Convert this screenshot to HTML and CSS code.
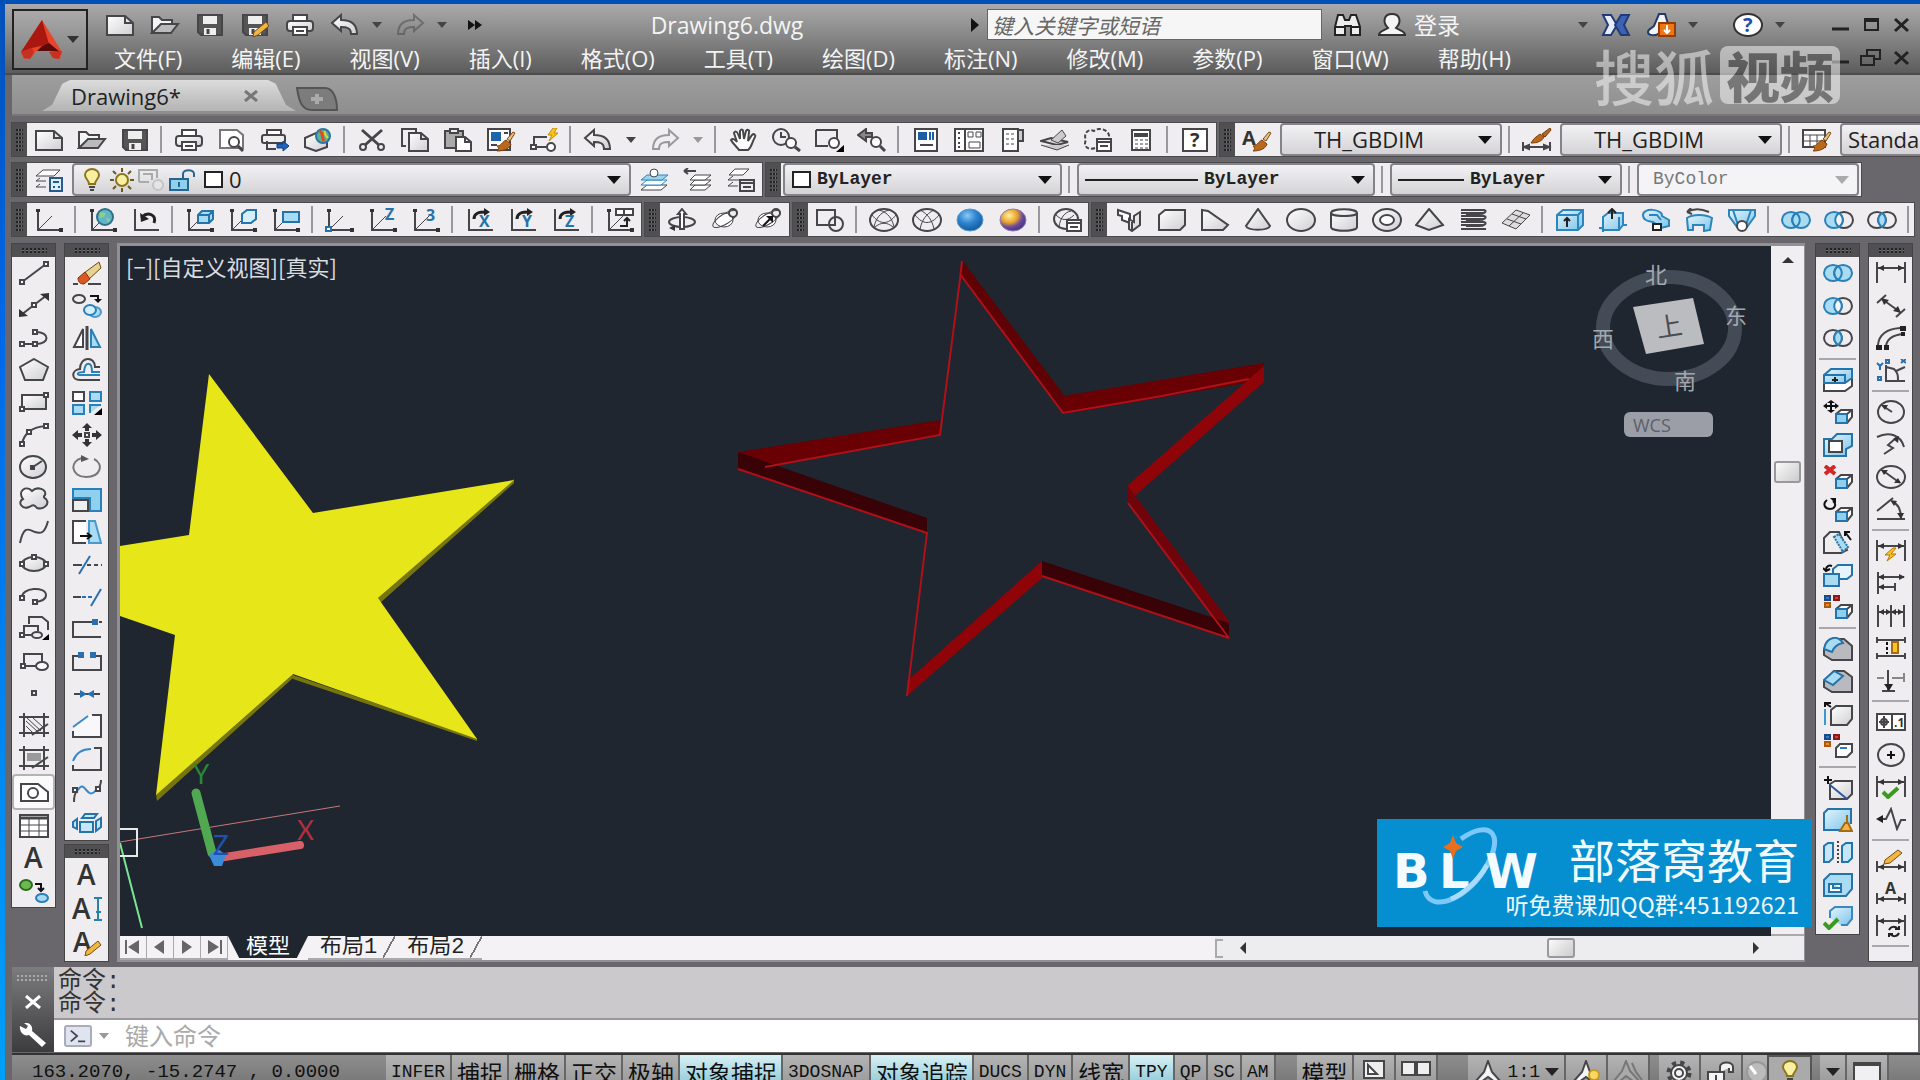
FILE: index.html
```html
<!DOCTYPE html>
<html lang="zh-CN">
<head>
	<meta charset="utf-8">
	<meta name="viewport" content="width=device-width, initial-scale=1.0">
	<title>Drawing6.dwg</title>
	<link rel="stylesheet" href="styles.css">
</head>
<body>
	<!-- shared fills -->
	<svg class="fills" aria-hidden="true">
		<defs>
			<linearGradient id="sky" x1="0" y1="0" x2="1" y2="1"><stop offset="0" stop-color="#e4f5fd"/><stop offset="1" stop-color="#7cc4ea"/></linearGradient>
			<linearGradient id="gray" x1="0" y1="0" x2="1" y2="1"><stop offset="0" stop-color="#fff"/><stop offset="1" stop-color="#cfcfd2"/></linearGradient>
			<radialGradient id="ball-blue" cx=".4" cy=".3" r=".7"><stop offset="0" stop-color="#8cc8f4"/><stop offset=".5" stop-color="#2d84cf"/><stop offset="1" stop-color="#155a9e"/></radialGradient>
			<radialGradient id="ball-gold" cx=".35" cy=".3" r=".8"><stop offset="0" stop-color="#fff0a0"/><stop offset=".4" stop-color="#e9a32c"/><stop offset=".65" stop-color="#6a4a9c"/><stop offset="1" stop-color="#3c2a80"/></radialGradient>
		</defs>
	</svg>
	<!-- icon sprite, every symbol is 30x24 -->
	<svg class="sprite" aria-hidden="true">
		<symbol id="new" viewBox="0 0 30 24"><path fill="url(#gray)" d="M2 3h18l8 7v12H2z"/><path d="M20 3v7h8"/></symbol>
		<symbol id="open" viewBox="0 0 30 24"><path fill="#f4f4f4" d="M2 20V4h7l3 3h10v5"/><path fill="#bbb" d="M2 20l9-9h17l-7 9z"/></symbol>
		<symbol id="save" viewBox="0 0 30 24"><path fill="#555" d="M3 2h24v20H6l-3-3z"/><path fill="#eee" stroke="none" d="M8 3h14v8H8zM9 15h12v7H9z"/><path d="M13 16v5" stroke-width="3"/></symbol>
		<symbol id="pencil" viewBox="0 0 30 24"><path fill="#f0b840" stroke="#7a4a14" stroke-width="1" d="M14 19l12-10 3 4-11 9-5 2z"/></symbol>
		<symbol id="saveas" viewBox="0 0 30 24"><use href="#save"/><use href="#pencil"/></symbol>
		<symbol id="print" viewBox="0 0 30 24"><path fill="#fff" d="M8 9V2h14v7"/><rect fill="url(#gray)" x="2" y="8" width="26" height="10" rx="3"/><path fill="#fff" d="M8 14h14v8H8z"/><path d="M11 18h8"/></symbol>
		<symbol id="preview" viewBox="0 0 30 24"><path fill="#fff" stroke="#777" d="M3 20V2h17l6 5v13z"/><circle cx="17" cy="14" r="5" fill="#fff"/><path stroke-width="3" d="M21 18l5 5"/></symbol>
		<symbol id="publish" viewBox="0 0 30 24"><path fill="#fff" d="M7 8V2h14v6"/><rect fill="#eee" x="2" y="7" width="23" height="8" rx="2"/><path d="M7 13v8h9"/><path fill="#1d64c0" stroke="#0b3f8a" stroke-width="1" d="M17 16h6v-3l6 5-6 5v-3h-6z"/></symbol>
		<symbol id="print3d" viewBox="0 0 30 24"><path fill="url(#gray)" d="M2 10l11-5 11 5v9l-11 4-11-4z"/><circle cx="20" cy="8" r="7" fill="#58b48c" stroke="#2b74a8"/><path stroke="#e84820" stroke-width="3" d="M17 3c4 3 1 6 4 10"/><path stroke="#f0d030" d="M22 3c-1 3 1 5 3 7"/></symbol>
		<symbol id="cut" viewBox="0 0 30 24"><path stroke-width="3" d="M5 2l17 15M25 2L8 17"/><circle cx="6" cy="19" r="3"/><circle cx="24" cy="19" r="3"/></symbol>
		<symbol id="copy" viewBox="0 0 30 24"><path d="M6 18H2V1h14v3"/><path fill="url(#gray)" d="M9 5h12l7 6v12H9z"/><path d="M21 5v6h7"/></symbol>
		<symbol id="paste" viewBox="0 0 30 24"><path fill="#aaa" d="M2 3h18v17H2z"/><path fill="#eee" d="M7 1h8v4H7z"/><path fill="#fff" d="M13 9h9l6 5v9H13z"/><path d="M22 9v5h6"/></symbol>
		<symbol id="brush" viewBox="0 0 30 24"><path fill="#e8c080" stroke="#7a4a14" stroke-width="1" d="M21 11l6-7 2 1-5 8z"/><path fill="#b8691c" stroke="#7a3c08" stroke-width="1" d="M11 18c4 0 5-4 9-6l5 4c-1 4-6 7-14 7 2-2 2-3 0-5z"/></symbol>
		<symbol id="match" viewBox="0 0 30 24"><path fill="#fff" d="M2 1h22v21H2z"/><path fill="#1d64a8" stroke="none" d="M5 4h10v9H5z"/><path d="M18 5h4M5 17h6"/><use href="#brush"/></symbol>
		<symbol id="bedit" viewBox="0 0 30 24"><path d="M5 19V9h13M5 19h12"/><path fill="#fff" d="M2 17h5v4H2z"/><circle cx="22" cy="19" r="4" fill="#fff"/><path fill="#f8c420" stroke="#c88a00" stroke-width="1" d="M24 0l-5 7h4l-3 6 9-8h-4l3-5z"/></symbol>
		<symbol id="undo" viewBox="0 0 30 24"><path fill="url(#gray)" d="M2 10l9-8v5c9 0 16 3 16 14h-6c0-6-4-7-10-7v4z"/></symbol>
		<symbol id="redo" viewBox="0 0 30 24"><path fill="none" d="M28 10l-9-8v5C10 7 3 10 3 21h6c0-6 4-7 10-7v4z"/></symbol>
		<symbol id="pan" viewBox="0 0 30 24"><path fill="#fff" d="M11 22c-2-3-6-6-8-10 1-2 4-1 6 2L6 5c1-2 3-2 4 1l2 5V3c1-2 3-2 3 0l1 8 2-8c1-2 4-1 3 1l-1 9 4-6c2-2 4 0 3 2-3 5-3 10-7 13z"/></symbol>
		<symbol id="zoomrt" viewBox="0 0 30 24"><circle cx="10" cy="9" r="8"/><path d="M10 4v5h5"/><circle cx="20" cy="15" r="5" fill="#fff"/><path stroke-width="3" d="M24 19l5 4"/></symbol>
		<symbol id="zoomwin" viewBox="0 0 30 24"><path d="M2 2h21v9M2 2v16h12"/><circle cx="20" cy="15" r="5" fill="#fff"/><path fill="#000" stroke="none" d="M30 17v7h-8z"/></symbol>
		<symbol id="zoomprev" viewBox="0 0 30 24"><path fill="#888" d="M1 7l8-6v4h6v4H9v4z"/><circle cx="19" cy="14" r="5" fill="#fff"/><path stroke-width="3" d="M23 18l5 5"/></symbol>
		<symbol id="props" viewBox="0 0 30 24"><path fill="#fff" d="M4 1h22v22H4z"/><path fill="#1d5ca8" stroke="none" d="M7 4h9v8H7z"/><path d="M19 4v8M22 4v8" stroke="#1d5ca8"/><path d="M9 17h13"/></symbol>
		<symbol id="dcenter" viewBox="0 0 30 24"><path fill="#fff" d="M1 1h28v22H1zM11 1v22"/><path stroke-dasharray="2 3" d="M4 5h5M4 10h5M4 15h5M4 19h5"/><path stroke-width="1" d="M14 4h5v5h-5zM22 4h5v5h-5zM15 14h11v6H15z"/></symbol>
		<symbol id="palette" viewBox="0 0 30 24"><path fill="#fff" d="M6 1h15v22H6z"/><path fill="#ccc" d="M21 2h5v11h-5z"/><path stroke-dasharray="3 2" stroke-width="1" d="M9 6h10M9 11h10M9 16h10"/></symbol>
		<symbol id="sheet" viewBox="0 0 30 24"><path fill="#ddd" d="M1 13l10-3 17 4-11 3z"/><path fill="#ccc" stroke-width="1" d="M1 17l16 5 12-5M11 12L22 2l4 6-8 7z"/></symbol>
		<symbol id="markup" viewBox="0 0 30 24"><path stroke-dasharray="4 2" d="M12 20c-8 3-12-3-9-8-3-6 2-12 8-9 6-5 16 0 15 6"/><path fill="#fff" d="M14 11h14v12H14zM14 14h14M17 18h8"/></symbol>
		<symbol id="calc" viewBox="0 0 30 24"><path fill="#fff" d="M6 2h18v20H6zM9 6h12v2H9z"/><path stroke-dasharray="3 2" stroke-width="1" d="M9 12h13M9 16h13M9 20h13"/></symbol>
		<symbol id="help" viewBox="0 0 30 24"><path fill="#fff" d="M3 1h24v22H3z"/><text x="10" y="19" class="glyph">?</text></symbol>
		<symbol id="tstyle" viewBox="0 0 30 24"><text x="0" y="17" class="glyph">A</text><use href="#brush"/></symbol>
		<symbol id="dstyle" viewBox="0 0 30 24"><path d="M1 14v9M28 14v9M2 19h25"/><path fill="#333" d="M2 19l5-2v4zM27 19l-5-2v4z"/><path fill="#b8691c" stroke="#7a3c08" stroke-width="1" d="M9 15c3-5 5-6 9-9l4 3c-2 4-6 6-13 6zM20 6l8-6 1 2-6 7z"/></symbol>
		<symbol id="tabstyle" viewBox="0 0 30 24"><path fill="#fff" d="M1 2h22v17H1z"/><path d="M1 7h22M8 7v12M15 7v12M1 13h22" stroke-width="1"/><use href="#brush"/></symbol>
		<symbol id="layers" viewBox="0 0 30 24"><path fill="#fff" stroke-width="1" d="M2 8l7-6h17l-6 6zM2 13h10M2 19h10M2 13l4-3M2 19l4-3"/><path fill="#d9effa" stroke="#2a5a8c" d="M16 10h12v13H16z"/><path stroke="#2a5a8c" d="M19 14h6M19 19h2M24 19h2"/></symbol>
		<symbol id="laycur" viewBox="0 0 30 24"><g fill="#fff" stroke-width="1"><path d="M1 22l6-5h20l-6 5z"/><path stroke="#2c86bd" d="M1 17l6-5h20l-6 5z"/><path stroke="#2c86bd" fill="#9bd4ef" d="M1 12l6-5h21l-6 5z"/><circle cx="14" cy="5" r="4"/></g></symbol>
		<symbol id="layprev" viewBox="0 0 30 24"><path d="M1 3h12M1 3l4-3M1 3l4 3"/><g fill="#fff" stroke-width="1"><path d="M7 22l5-5h16l-6 5z"/><path d="M7 17l5-5h16l-6 5z"/><path d="M7 12l5-5h16l-6 5z"/></g></symbol>
		<symbol id="laystate" viewBox="0 0 30 24"><path fill="#fff" stroke-width="1" d="M3 7l6-6h14l-6 6zM2 12h13M2 18h10M2 12l5-4M2 18l5-4"/><path fill="#eee" d="M14 12h14v11H14zM14 15h14M17 19h8"/></symbol>
		<symbol id="bulb" viewBox="0 0 30 24"><path fill="#f8f0a0" stroke="#8a7420" d="M12 16c0-4-4-5-4-9a7 6 0 0 1 14 0c0 4-4 5-4 9z"/><path d="M12 19h6M13 22h4"/></symbol>
		<symbol id="sun" viewBox="0 0 30 24"><circle cx="15" cy="12" r="6" fill="#f8f0a0" stroke="#8a7420"/><path stroke="#6a5a20" d="M15 0v4M15 20v4M3 12h4M23 12h4M6 3l3 3M24 3l-3 3M6 21l3-3M24 21l-3-3"/></symbol>
		<symbol id="vpfreeze" viewBox="0 0 30 24"><path stroke="#aaa" d="M2 14V2h18v8M2 14h10M6 6h9v6"/><circle cx="21" cy="17" r="5" stroke="#c4c4c4" fill="#e4e4e4"/></symbol>
		<symbol id="unlock" viewBox="0 0 30 24"><path fill="#8fd0ee" stroke="#24668f" d="M3 11h18v11H3z"/><path stroke="#24668f" d="M16 11V6c0-5 11-5 11 0v3"/><path stroke="#24668f" d="M12 14v5"/></symbol>
		<symbol id="ucs" viewBox="0 0 30 24"><path d="M4 1v21h24"/><path stroke-width="1" d="M4 22L18 8"/><path fill="#333" stroke="none" d="M2 1h4v3H2zM25 20h4v4h-4z"/></symbol>
		<symbol id="ucsworld" viewBox="0 0 30 24"><use href="#ucs"/><circle cx="17" cy="9" r="8" fill="#62b5c9" stroke="#2f7186"/><path fill="#8ad08c" stroke="none" d="M12 4l6 1-2 4-5 1zM18 10l4 1-2 4z"/></symbol>
		<symbol id="ucsprev" viewBox="0 0 30 24"><path d="M4 1v21h24"/><path stroke="#222" stroke-width="3" d="M11 9c6-6 15-2 12 6"/><path fill="#222" stroke="none" d="M9 5l9 6-8 3z"/></symbol>
		<symbol id="ucsface" viewBox="0 0 30 24"><use href="#ucs"/><path fill="#a6dbf3" stroke="#2473aa" d="M13 7l4-4h11v8l-4 4H13zM13 7h11v8M24 7l4-4"/></symbol>
		<symbol id="ucsobj" viewBox="0 0 30 24"><use href="#ucs"/><path fill="#d4eefa" stroke="#2473aa" d="M14 6l5-4h9v9l-5 4h-9z"/></symbol>
		<symbol id="ucsview" viewBox="0 0 30 24"><use href="#ucs"/><rect fill="#a6dbf3" stroke="#2473aa" x="12" y="4" width="16" height="10"/></symbol>
		<symbol id="ucsorg" viewBox="0 0 30 24"><use href="#ucs"/><rect fill="#fff" stroke="#2473aa" x="1" y="19" width="5" height="4"/></symbol>
		<symbol id="ucsz" viewBox="0 0 30 24"><use href="#ucs"/><text x="17" y="12" class="glyph blue small">Z</text></symbol>
		<symbol id="ucs3" viewBox="0 0 30 24"><use href="#ucs"/><text x="15" y="13" class="glyph blue small">3</text></symbol>
		<symbol id="rot" viewBox="0 0 30 24"><path d="M4 1v21h24"/><path stroke="#222" stroke-width="3" d="M9 11c0-6 5-7 12-7"/><path fill="#222" stroke="none" d="M19 0l6 4-6 4z"/></symbol>
		<symbol id="rotx" viewBox="0 0 30 24"><use href="#rot"/><text x="14" y="19" class="glyph blue small">X</text></symbol>
		<symbol id="roty" viewBox="0 0 30 24"><use href="#rot"/><text x="14" y="19" class="glyph blue small">Y</text></symbol>
		<symbol id="rotz" viewBox="0 0 30 24"><use href="#rot"/><text x="14" y="19" class="glyph blue small">Z</text></symbol>
		<symbol id="ucsapply" viewBox="0 0 30 24"><use href="#ucs"/><path fill="#fff" d="M11 1h8v6h-8zM19 1h9v6h-9z"/><path stroke="#222" d="M15 18h7v-7M19 13l3-3 3 3"/></symbol>
		<symbol id="orbit" viewBox="0 0 30 24"><ellipse cx="15" cy="14" rx="13" ry="5"/><path fill="#fff" d="M15 1l4 5h-2v15h-4V6h-2z"/><path fill="#333" stroke="none" d="M2 20l6-3v6z"/></symbol>
		<symbol id="forbit" viewBox="0 0 30 24"><g stroke-width="1"><ellipse cx="14" cy="12" rx="9" ry="7" fill="#fff"/><ellipse cx="15" cy="11" rx="14" ry="5" transform="rotate(-32 15 11)"/><circle cx="23" cy="5" r="4" stroke-width="2"/></g></symbol>
		<symbol id="corbit" viewBox="0 0 30 24"><use href="#forbit"/><path stroke="#111" d="M10 18l8-8"/><path fill="#111" stroke="none" d="M13 8h7v7z"/></symbol>
		<symbol id="vs2d" viewBox="0 0 30 24"><path d="M2 2h18v15H2z"/><circle cx="21" cy="16" r="7"/></symbol>
		<symbol id="vswire" viewBox="0 0 30 24"><ellipse cx="15" cy="12" rx="14" ry="11"/><path stroke-width="1" d="M3 7c8 10 16 10 24 0M5 19C7 8 15 2 22 2M25 19C23 8 15 2 8 2M6 19c6-5 12-5 18 0"/></symbol>
		<symbol id="vshide" viewBox="0 0 30 24"><ellipse cx="15" cy="12" rx="14" ry="11"/><path stroke-width="1" d="M3 7c8 10 16 10 24 0M8 2c8 4 12 10 14 19M22 2C14 6 10 12 8 21"/></symbol>
		<symbol id="vsreal" viewBox="0 0 30 24"><ellipse cx="15" cy="12" rx="13" ry="11" fill="url(#ball-blue)" stroke="#5c9cd2" stroke-width="1"/></symbol>
		<symbol id="vsconc" viewBox="0 0 30 24"><ellipse cx="15" cy="12" rx="13" ry="11" fill="url(#ball-gold)" stroke="#8c7ab0" stroke-width="1"/></symbol>
		<symbol id="vsman" viewBox="0 0 30 24"><ellipse cx="14" cy="11" rx="12" ry="10"/><path stroke-width="1" d="M4 7c6 6 12 6 18 0M7 19C8 10 13 4 19 3"/><path fill="#fff" d="M15 12h14v11H15zM15 15h14M18 19h8"/></symbol>
		<symbol id="polysolid" viewBox="0 0 30 24"><path fill="#fff" d="M4 2l12 4v9l-8-3V8L4 7z"/><path fill="url(#gray)" d="M15 11l5 3V8l6-4v13l-8 6-3-2zM18 23v-9"/></symbol>
		<symbol id="box" viewBox="0 0 30 24"><path fill="url(#gray)" d="M2 7l6-5h20v15l-5 5H2z"/></symbol>
		<symbol id="wedge" viewBox="0 0 30 24"><path fill="url(#gray)" d="M2 2l6 1 20 14-5 5H2z"/></symbol>
		<symbol id="cone" viewBox="0 0 30 24"><path fill="url(#gray)" d="M15 1l12 17c-2 5-22 5-24 0z"/></symbol>
		<symbol id="sphere" viewBox="0 0 30 24"><ellipse fill="url(#gray)" cx="15" cy="12" rx="14" ry="11"/></symbol>
		<symbol id="cylinder" viewBox="0 0 30 24"><path fill="url(#gray)" d="M2 5c0-5 26-5 26 0v14c0 5-26 5-26 0zM2 5c0 4 26 4 26 0"/></symbol>
		<symbol id="torus" viewBox="0 0 30 24"><ellipse fill="url(#gray)" cx="15" cy="12" rx="14" ry="11"/><ellipse fill="#fff" cx="15" cy="12" rx="7" ry="5"/></symbol>
		<symbol id="pyramid" viewBox="0 0 30 24"><path fill="url(#gray)" d="M14 1l14 16-14 5-13-5z"/></symbol>
		<symbol id="helix" viewBox="0 0 30 24"><path d="M3 2h23c4 1 0 4-5 4H8M3 8h23c4 1 0 4-5 4H8M3 14h23c4 1 0 4-5 4H8M3 21h25M3 5h22M3 11h22M3 17h22"/></symbol>
		<symbol id="planar" viewBox="0 0 30 24"><path fill="#ddd" stroke-width="1" d="M1 15L15 2l14 5-14 14zM8 18L22 5M6 11l14 5M11 6l14 5"/></symbol>
		<symbol id="extrude" viewBox="0 0 30 24"><path fill="url(#sky)" stroke="#2a86bd" d="M2 7l6-5h20v15l-5 5H2zM2 7h21v15M23 7l5-5"/><path stroke="#222" d="M12 19v-8M9 13l3-3 3 3"/></symbol>
		<symbol id="presspull" viewBox="0 0 30 24"><path fill="url(#sky)" stroke="#2a86bd" d="M5 9l5-4h15v12l-4 5H5zM1 20h4v4M21 9v13M25 17h4"/><path stroke="#222" d="M14 11V2M10 5l4-4 4 4"/></symbol>
		<symbol id="sweep" viewBox="0 0 30 24"><path fill="url(#sky)" stroke="#2a86bd" d="M2 7c0-8 20-6 19 1l7 4v6l-8 2-8-6C6 13 2 12 2 7zM8 7h8l4 5"/><path fill="#fff" stroke="#222" d="M12 16h8v6h-8z"/></symbol>
		<symbol id="revolve" viewBox="0 0 30 24"><path fill="url(#sky)" stroke="#2a86bd" d="M3 10c6-4 18-4 25 0l-2 12-6 1v-6H9v5H4z"/><path d="M3 4c7-4 15-3 22 0M3 4l4-4M3 4l5 2"/></symbol>
		<symbol id="loft" viewBox="0 0 30 24"><path fill="url(#sky)" stroke="#2a86bd" d="M2 2h26v6l-8 11H10L2 8z"/><path stroke="#2a86bd" d="M6 2l5 15M24 2l-5 15"/><circle cx="15" cy="18" r="5" fill="#fff"/></symbol>
		<symbol id="union" viewBox="0 0 30 24"><g fill="#a9dcf2" stroke="#2a80b8"><ellipse cx="10" cy="12" rx="9" ry="8"/><ellipse cx="20" cy="12" rx="9" ry="8"/></g><path stroke="#2a80b8" d="M15 5c5 4 5 10 0 14-5-4-5-10 0-14z"/></symbol>
		<symbol id="subtract" viewBox="0 0 30 24"><ellipse cx="20" cy="12" rx="9" ry="8"/><ellipse cx="10" cy="12" rx="9" ry="8" fill="#a9dcf2" stroke="#2a80b8"/><path fill="#f4f4f6" stroke="#2a80b8" d="M15 5c5 4 5 10 0 14-5-4-5-10 0-14z"/></symbol>
		<symbol id="intersect" viewBox="0 0 30 24"><ellipse cx="10" cy="12" rx="9" ry="8"/><ellipse cx="20" cy="12" rx="9" ry="8"/><path fill="#a9dcf2" stroke="#2a80b8" d="M15 5c5 4 5 10 0 14-5-4-5-10 0-14z"/></symbol>
		<!-- draw -->
		<symbol id="line" viewBox="0 0 30 24"><path d="M3 21L27 3"/><path fill="#fff" d="M1 19h4v4H1zM25 1h4v4h-4z"/></symbol>
		<symbol id="xline" viewBox="0 0 30 24"><path d="M2 22L28 2"/><path fill="#333" stroke="none" d="M0 24v-8l9 7zM30 0v8l-9-7z"/><path fill="#fff" d="M13 10h4v4h-4z"/></symbol>
		<symbol id="pline" viewBox="0 0 30 24"><path d="M3 18h14c14 0 14-12 0-12"/><path fill="#fff" d="M1 16h4v4H1zM14 16h4v4h-4zM14 4h4v4h-4z"/></symbol>
		<symbol id="polygon" viewBox="0 0 30 24"><path fill="url(#gray)" d="M15 1l14 8-5 13H6L1 9z"/></symbol>
		<symbol id="rect" viewBox="0 0 30 24"><path fill="url(#gray)" d="M3 5h24v14H3z"/><path fill="#fff" d="M1 17h4v4H1zM25 3h4v4h-4z"/></symbol>
		<symbol id="arc" viewBox="0 0 30 24"><path d="M3 21C5 10 13 4 27 3"/><path fill="#fff" d="M1 19h4v4H1zM8 7h4v4H8zM25 1h4v4h-4z"/></symbol>
		<symbol id="circle" viewBox="0 0 30 24"><ellipse fill="url(#gray)" cx="14" cy="12" rx="13" ry="11"/><path d="M14 12l9-6"/><path fill="#333" d="M12 11h3v3h-3z"/></symbol>
		<symbol id="cloud" viewBox="0 0 30 24"><path fill="url(#gray)" d="M13 4c5-5 15-2 13 4-2 2-1 3 1 4 4 5-2 11-9 9-3-4-4-3-8-1-7 3-12-5-6-8-6-8 3-14 9-8z"/></symbol>
		<symbol id="spline" viewBox="0 0 30 24"><path d="M1 23C5 4 10 10 16 12s10 1 13-11"/></symbol>
		<symbol id="ellipse" viewBox="0 0 30 24"><ellipse fill="url(#gray)" cx="15" cy="12" rx="12" ry="7"/><path fill="#fff" d="M1 10h4v4H1zM13 3h4v4h-4zM25 10h4v4h-4z"/></symbol>
		<symbol id="earc" viewBox="0 0 30 24"><path d="M3 14C2 3 27 2 27 11c0 5-5 6-10 7"/><path fill="#fff" d="M1 12h4v4H1zM14 16h4v4h-4z"/></symbol>
		<symbol id="insert" viewBox="0 0 30 24"><path d="M10 8V1h13l6 5v8M5 19V10h14v5M5 19h9"/><path fill="#fff" d="M1 17h4v4H1z"/><ellipse cx="18" cy="19" rx="5" ry="3"/><path fill="#000" stroke="none" d="M30 18v6h-7z"/></symbol>
		<symbol id="block" viewBox="0 0 30 24"><path d="M5 17V5h18v10M5 17h13"/><path fill="#fff" d="M2 15h4v4H2z"/><ellipse fill="#fff" cx="23" cy="17" rx="6" ry="4"/></symbol>
		<symbol id="point" viewBox="0 0 30 24"><path d="M13 10h4v4h-4z"/></symbol>
		<symbol id="hatch" viewBox="0 0 30 24"><path d="M5 0v24M25 0v24M0 4h30M0 20h30"/><path stroke-width="1" d="M7 8l12 11M8 5l14 13M14 5l10 9M7 13l6 6"/><path d="M13 22l16-11"/></symbol>
		<symbol id="gradient" viewBox="0 0 30 24"><path fill="#999" stroke="none" d="M8 7h14v8H8z"/><path d="M5 0v24M25 0v24M0 4h30M0 20h30M13 22l16-11"/></symbol>
		<symbol id="region" viewBox="0 0 30 24"><path fill="#fff" d="M2 4h17l10 8v9H2z"/><circle cx="14" cy="13" r="5"/></symbol>
		<symbol id="table" viewBox="0 0 30 24"><path fill="#fff" d="M1 1h28v22H1z"/><path stroke-width="3" d="M1 4h28"/><path stroke-width="1" d="M1 11h28M1 17h28M10 4v19M20 4v19"/></symbol>
		<symbol id="mtext" viewBox="0 0 30 24"><text x="5" y="22" class="glyph big">A</text></symbol>
		<symbol id="addsel" viewBox="0 0 30 24"><ellipse cx="7" cy="6" rx="6" ry="5" fill="#6cb850" stroke="#2c6a20"/><ellipse cx="23" cy="19" rx="6" ry="4" fill="#a9d8f4" stroke="#2a80b8"/><path stroke="#111" d="M16 5h6v6M19 9l3 3 3-3"/></symbol>
		<!-- modify -->
		<symbol id="erase" viewBox="0 0 30 24"><path d="M1 23h5M16 23h13"/><path fill="#e8d090" stroke="#6a4a14" stroke-width="1" d="M12 12L27 1l2 6-13 12z"/><path fill="#d85a20" stroke="#8a2a08" stroke-width="1" d="M6 17l7-6 5 7-6 5c-4 0-6-2-6-6z"/></symbol>
		<symbol id="copyobj" viewBox="0 0 30 24"><ellipse cx="7" cy="5" rx="6" ry="4"/><path stroke="#111" d="M18 2h8v4"/><path fill="#111" stroke="none" d="M22 5h8l-4 4z"/><ellipse cx="23" cy="18" rx="6" ry="5" fill="#a9dcf2" stroke="#4a98cc"/><ellipse cx="18" cy="16" rx="6" ry="5" fill="#d4eefa" stroke="#2a80b8"/></symbol>
		<symbol id="mirror" viewBox="0 0 30 24"><path fill="#fff" d="M11 3v18H2z"/><path stroke-width="3" d="M15 0v24"/><path fill="#a9dcf2" stroke="#2a80b8" d="M19 3v18h9z"/></symbol>
		<symbol id="offset" viewBox="0 0 30 24"><path d="M28 22H8C-1 22-1 12 8 11c0-13 15-13 15-2h5"/><path stroke="#2a80b8" d="M28 17H9c-5 0-4-3 3-3 1-11 8-11 8 0h8"/></symbol>
		<symbol id="array" viewBox="0 0 30 24"><path fill="#fff" d="M1 1h11v9H1z"/><path fill="#a9dcf2" stroke="#2a80b8" d="M18 1h11v9H18zM1 14h11v9H1zM18 22v-8h11"/><path fill="#000" stroke="none" d="M30 17v7h-8z"/></symbol>
		<symbol id="move" viewBox="0 0 30 24"><path d="M13 10h4v4h-4z"/><path fill="#333" stroke="none" d="M15 0l5 5h-3v3h-4V5h-3zM15 24l5-5h-3v-3h-4v3h-3zM0 12l6-5v3h4v4H6v3zM30 12l-6-5v3h-4v4h4v3z"/></symbol>
		<symbol id="rotate" viewBox="0 0 30 24"><path stroke="#777" d="M10 3C-3 6-1 22 14 22S32 9 22 4"/><path fill="#555" stroke="none" d="M9 0l8 4-8 3z"/></symbol>
		<symbol id="scale" viewBox="0 0 30 24"><path fill="#8fd0ee" stroke="#2a80b8" d="M1 1h28v22H18V10H1z"/><path fill="#eee" d="M1 12h15v11H1z"/></symbol>
		<symbol id="stretch" viewBox="0 0 30 24"><path fill="#fff" d="M14 1H1v22h13"/><path fill="#a9dcf2" stroke="#4a98cc" d="M17 1h6l6 22H17z"/><path stroke="#111" d="M8 16h10M15 13l4 3-4 3"/></symbol>
		<symbol id="trim" viewBox="0 0 30 24"><path d="M1 12h9"/><path stroke-dasharray="4 3" d="M15 12h15"/><path stroke="#2a70b0" d="M7 21L18 3"/></symbol>
		<symbol id="extend" viewBox="0 0 30 24"><path d="M1 12h8"/><path stroke="#2a70b0" stroke-dasharray="4 2" d="M10 12h11"/><path stroke="#2a70b0" d="M19 21L29 4"/></symbol>
		<symbol id="breakpt" viewBox="0 0 30 24"><path d="M20 5H1v15h28M27 5h3"/><path fill="#2a70b0" stroke="none" d="M20 2h6v6h-6z"/></symbol>
		<symbol id="breakobj" viewBox="0 0 30 24"><path d="M6 6H1v14h28V6h-5"/><path fill="#2a70b0" stroke="none" d="M6 2h6v6H6zM18 2h6v6h-6z"/></symbol>
		<symbol id="join" viewBox="0 0 30 24"><path d="M2 12h26"/><path fill="#2a70b0" stroke="none" d="M8 8l7 4-7 4zM22 8l-7 4 7 4z"/></symbol>
		<symbol id="chamfer" viewBox="0 0 30 24"><path fill="#f8f8fa" stroke="none" d="M1 15L17 1h12v22H1z"/><path d="M20 1h9v22H1v-6"/><path stroke="#3a88c8" d="M1 13L16 2"/></symbol>
		<symbol id="fillet" viewBox="0 0 30 24"><path d="M22 1h7v22H1v-5"/><path stroke="#3a88c8" d="M1 14C4 6 10 2 19 2"/></symbol>
		<symbol id="blend" viewBox="0 0 30 24"><path d="M2 23c0-7 1-10 4-12M25 10c3-2 4-5 4-9"/><path stroke="#3a88c8" d="M6 11c7-12 9 12 18 0"/><path fill="#fff" d="M1 9h4v4H1zM24 8h4v4h-4z"/></symbol>
		<symbol id="explode" viewBox="0 0 30 24"><g fill="#c4e6f6" stroke="#2473aa"><path d="M10 6l3-4h12l-3 4z"/><path d="M8 10h13v10H8z"/><path d="M24 9l5-3v9l-5 4zM1 10l4-3v10l-4-2z"/></g></symbol>
		<symbol id="dtext" viewBox="0 0 30 24"><text x="0" y="22" class="glyph big">A</text><path stroke="#2a80a8" d="M26 1v22M22 1h8M22 23h8M24 15h5"/></symbol>
		<symbol id="edtext" viewBox="0 0 30 24"><text x="1" y="20" class="glyph big">A</text><use href="#pencil"/></symbol>
		<!-- solid editing -->
		<symbol id="exface" viewBox="0 0 30 24"><path fill="#fff" d="M1 13v10h21l7-5V8"/><path fill="url(#sky)" stroke="#2473aa" d="M1 7l7-6h21v9l-7 5H1zM1 7h21v8"/><path stroke="#222" d="M12 14V9M9 12h6"/></symbol>
		<symbol id="cube" viewBox="0 0 30 24"><path fill="#fff" d="M13 14l5-4h11v7l-5 6"/><path fill="#8fd0ee" stroke="#2473aa" d="M13 14h11v9H13z"/><path d="M24 14l5-4"/></symbol>
		<symbol id="moveface" viewBox="0 0 30 24"><use href="#cube"/><path fill="#111" stroke="none" d="M8 0l4 3h-3v2h3V3l4 3-4 3V7H9v3h3l-4 3-4-3h3V7H4v2L0 6l4-3v2h3V3H4z"/></symbol>
		<symbol id="offface" viewBox="0 0 30 24"><path fill="url(#sky)" stroke="#2473aa" d="M1 6h8l5-5h15v12l-6 3v7H1z"/><path fill="#fff" d="M6 8h13v11H6z"/></symbol>
		<symbol id="delface" viewBox="0 0 30 24"><use href="#cube"/><path stroke="#d02828" stroke-width="4" d="M2 1l10 8M12 1L2 9"/></symbol>
		<symbol id="rotface" viewBox="0 0 30 24"><use href="#cube"/><path stroke="#111" d="M4 2c-5 4-2 9 3 9s7-5 3-8"/><path fill="#111" stroke="none" d="M7 0h6v6z"/></symbol>
		<symbol id="taper" viewBox="0 0 30 24"><path fill="#eee" d="M1 8l6-6h9l8 18-6 3H1z"/><path fill="#a9dcf2" stroke="#2473aa" stroke-dasharray="2 1" d="M11 7l5-3 9 13-5 5z"/><path stroke="#111" d="M28 10l-6-8M22 6V2h5"/></symbol>
		<symbol id="copyface" viewBox="0 0 30 24"><path fill="#e4f5fd" stroke="#2473aa" d="M10 6l5-4h14v10l-5 4H10z"/><path fill="#a9dcf2" stroke="#2473aa" d="M1 11h15v12H1z"/><path stroke="#111" d="M3 7c0-4 3-5 6-4M0 5l3 3 4-2"/></symbol>
		<symbol id="dots" viewBox="0 0 30 24"><path fill="#3a78c0" stroke="#1a4a88" d="M2 1h5v4H2z"/><path fill="#d84040" stroke="#8a1a1a" d="M11 1h5v4h-5z"/><path fill="#f09030" stroke="#a85a10" d="M2 8h5v4H2z"/></symbol>
		<symbol id="colface" viewBox="0 0 30 24"><use href="#cube"/><use href="#dots"/></symbol>
		<symbol id="filedge" viewBox="0 0 30 24"><path fill="#b9b9c0" d="M1 12l9-10h11l8 7v14H9L1 18z"/><path fill="#a9dcf2" stroke="#2473aa" d="M1 12C2 5 6 2 10 1c5-1 8 2 10 5-5 1-9 3-11 9z"/></symbol>
		<symbol id="chaedge" viewBox="0 0 30 24"><path fill="#b9b9c0" d="M1 12l10-10h10l8 6v15H9L1 18z"/><path fill="#a9dcf2" stroke="#2473aa" d="M1 11L11 2l9 5-10 9z"/></symbol>
		<symbol id="copyedge" viewBox="0 0 30 24"><path fill="url(#gray)" d="M8 8l5-4h16v13l-5 6H8z"/><path stroke="#3a98d0" d="M2 7v16"/><path stroke="#111" d="M2 5V1h6M2 1l6 4"/></symbol>
		<symbol id="coledge" viewBox="0 0 30 24"><path fill="#fff" d="M13 14l4-4h12v8l-5 5H13z"/><path stroke="#2a80b8" d="M17 14h7"/><use href="#dots"/></symbol>
		<symbol id="imprint" viewBox="0 0 30 24"><path fill="url(#gray)" d="M7 8l5-3h17v13l-5 5H7z"/><path stroke="#2a5a9c" d="M7 9l17 14"/><path stroke="#111" d="M1 4h8M5 0v8"/></symbol>
		<symbol id="clean" viewBox="0 0 30 24"><path fill="url(#sky)" stroke="#2473aa" d="M17 22H1V5l4-4h23v15"/><path fill="#f0b840" stroke="#a86a10" d="M24 7v8h-2l-5 8h12l-4-8h-1"/></symbol>
		<symbol id="separate" viewBox="0 0 30 24"><path fill="#c4e6f6" stroke="#2473aa" d="M1 5l4-3h5v15l-4 4H1zM19 5l4-3h6v15l-4 4h-6z"/><path stroke-dasharray="2 2" d="M15 0v24"/></symbol>
		<symbol id="shell" viewBox="0 0 30 24"><path fill="#a9dcf2" stroke="#2473aa" d="M1 7l6-6h22v15l-6 7H1z"/><path fill="#fff" stroke="#2473aa" d="M6 11h12v8H6zM10 11v4h8"/></symbol>
		<symbol id="tick" viewBox="0 0 30 24"><path stroke="#3c9a20" stroke-width="4" d="M7 17l5 5 10-9"/></symbol>
		<symbol id="check" viewBox="0 0 30 24"><path fill="url(#sky)" stroke="#3a88c0" d="M7 12V5l5-4h17v12l-5 6h-6"/><path stroke="#3c9a20" stroke-width="4" d="M1 17l5 5 9-9"/></symbol>
		<!-- dimensions -->
		<symbol id="dimlin" viewBox="0 0 30 24"><path d="M1 1v21M29 1v21M2 7h26"/><path fill="#333" stroke="none" d="M2 7l6-3v6zM28 7l-6-3v6z"/></symbol>
		<symbol id="dimali" viewBox="0 0 30 24"><path d="M1 9l9-8M20 23l9-8M6 5l18 13"/><path fill="#333" stroke="none" d="M5 4l8 2-5 5zM25 19l-8-2 5-5z"/></symbol>
		<symbol id="dimarc" viewBox="0 0 30 24"><path d="M2 19C3 8 12 3 24 2M10 20c1-7 7-11 17-12"/><path fill="#222" stroke="none" d="M0 19h6v5H0zM24 0h6v5h-6zM8 19h5v5H8zM25 6h4v4h-4z"/></symbol>
		<symbol id="dimord" viewBox="0 0 30 24"><path d="M10 6v16h19M10 8l8 2c4 4 4 6 4 12M20 12l9-4"/><path stroke="#2a70b0" d="M1 4l3 3 3-3M4 7v4M25 0l5 4M30 0l-5 4M10 1h3v3h-3zM2 18h3v3H2z"/></symbol>
		<symbol id="dimrad" viewBox="0 0 30 24"><ellipse cx="15" cy="12" rx="13" ry="11"/><path d="M16 12L7 6"/><path fill="#333" stroke="none" d="M5 5l7 0-3 5z"/></symbol>
		<symbol id="dimjog" viewBox="0 0 30 24"><path d="M1 5c12-6 24-2 27 10M8 22l9-6-5-3 9-8"/><path fill="#333" stroke="none" d="M23 4l-1 7-5-4z"/></symbol>
		<symbol id="dimdia" viewBox="0 0 30 24"><ellipse cx="15" cy="12" rx="14" ry="11"/><path d="M6 5l18 13"/><path fill="#333" stroke="none" d="M5 5h7l-4 5zM25 18h-7l4-5z"/></symbol>
		<symbol id="dimang" viewBox="0 0 30 24"><path d="M29 22H1M1 14L17 1M17 5c6 3 8 8 8 16"/><path fill="#333" stroke="none" d="M14 3l7 1-3 5zM25 22l-4-6h7z"/></symbol>
		<symbol id="qdim" viewBox="0 0 30 24"><use href="#dimlin"/><path fill="#f8c420" stroke="#b87800" stroke-width="1" d="M17 9l-8 7h5l-3 6 9-7h-5l5-6z"/></symbol>
		<symbol id="dimbase" viewBox="0 0 30 24"><path d="M2 1v22M2 6h26M2 16h17M19 12v8"/><path fill="#333" stroke="none" d="M2 6l6-3v6zM29 6l-6-3v6zM2 16l6-3v6z"/></symbol>
		<symbol id="dimcont" viewBox="0 0 30 24"><path d="M2 1v22M15 1v22M28 1v22M2 8h26"/><path fill="#333" stroke="none" d="M3 8l5-3v6zM27 8l-5-3v6zM15 8l-5-3v6zM15 8l5-3v6z"/></symbol>
		<symbol id="dimspace" viewBox="0 0 30 24"><path d="M1 1v6M29 1v6M1 4h28M1 17v6M29 17v6M1 20h28"/><path stroke="#111" stroke-dasharray="3 2" d="M11 6v12"/><path fill="#f8c420" stroke="#a86a10" d="M16 6h6v11h-6z"/></symbol>
		<symbol id="dimbreak" viewBox="0 0 30 24"><path d="M12 1v20M6 22h13"/><path stroke="#888" d="M1 9h7M16 9h12M28 4v9"/><path fill="#222" stroke="none" d="M8 15h9l-4 7z"/></symbol>
		<symbol id="tol" viewBox="0 0 30 24"><path fill="#fff" d="M1 4h28v16H1zM16 4v16"/><path d="M8 6v12M3 12h10"/><circle cx="8" cy="12" r="3"/><text x="18" y="17" class="glyph tiny">.1</text></symbol>
		<symbol id="cmark" viewBox="0 0 30 24"><ellipse cx="15" cy="12" rx="13" ry="11"/><path stroke="#111" d="M11 12h8M15 8v8"/></symbol>
		<symbol id="inspect" viewBox="0 0 30 24"><use href="#dimlin"/><use href="#tick"/></symbol>
		<symbol id="jogline" viewBox="0 0 30 24"><path d="M2 12h8l5-10 6 20 4-9h5"/><path fill="#222" stroke="none" d="M0 12l7-4v8z"/></symbol>
		<symbol id="dimedit" viewBox="0 0 30 24"><path d="M1 12v11M29 12v11M2 18h26"/><path fill="#333" stroke="none" d="M2 18l6-3v6zM28 18l-6-3v6z"/><path fill="#f0b840" stroke="#7a4a14" stroke-width="1" d="M9 11l13-10 4 3-12 10-6 1z"/></symbol>
		<symbol id="dimtedit" viewBox="0 0 30 24"><path d="M1 12v11M29 12v11M2 18h26"/><path fill="#333" stroke="none" d="M2 18l6-3v6zM28 18l-6-3v6z"/><text x="9" y="13" class="glyph small">A</text></symbol>
		<symbol id="dimupd" viewBox="0 0 30 24"><use href="#dimlin"/><path stroke="#222" d="M13 16c2-4 6-4 9-1M23 19c-2 4-6 4-9 1M19 15h4v-3M17 20h-4v3"/></symbol>
		<!-- title bar -->
		<symbol id="binoc" viewBox="0 0 30 24"><path fill="#eee" stroke="#222" d="M6 2h5l2 5h4l2-5h5l4 12v8h-9v-9h-6v9H3v-8z"/><path stroke="#222" d="M3 14h9M18 14h9"/></symbol>
		<symbol id="user" viewBox="0 0 30 24"><path fill="#f4f4f4" stroke="#333" d="M2 22c0-4 6-5 9-7-6-6-4-14 4-14s10 8 4 14c3 2 9 3 9 7z"/></symbol>
		<symbol id="exchange" viewBox="0 0 30 24"><path fill="#e8eef8" stroke="#223a78" d="M2 2h8l6 10-6 10H2l5-10z"/><path fill="#3c62b4" stroke="#223a78" d="M28 2h-8l-6 10 6 10h8l-5-10z"/></symbol>
		<symbol id="a360" viewBox="0 0 30 24"><path fill="#f4f4f4" stroke="#223a68" d="M13 1h6l3 10-9 9c-2 3-11 3-11-1 0-3 4-4 6-6z"/><path fill="#e87818" stroke="#983c00" d="M13 10h16v13H13z"/><path stroke="#fff" d="M21 12v8M18 17l3 3 3-3"/></symbol>
		<symbol id="helpball" viewBox="0 0 30 24"><ellipse cx="15" cy="12" rx="14" ry="11" fill="#fff" stroke="#333"/><text x="10" y="19" class="glyph royal">?</text></symbol>
		<symbol id="wmin" viewBox="0 0 30 24"><path stroke="#222" stroke-width="3" d="M7 16h17"/></symbol>
		<symbol id="wmax" viewBox="0 0 30 24"><path stroke="#222" d="M9 6h13v11H9zM9 8h13"/></symbol>
		<symbol id="wrest" viewBox="0 0 30 24"><path stroke="#222" d="M5 10h13v9H5zM11 9V4h13v9h-5"/></symbol>
		<symbol id="wclose" viewBox="0 0 30 24"><path stroke="#222" stroke-width="3" d="M8 6l13 12M21 6L8 18"/></symbol>
		<symbol id="more" viewBox="0 0 30 24"><path fill="#111" stroke="none" d="M8 7l7 5-7 5zM15 7l7 5-7 5z"/></symbol>
		<!-- status bar -->
		<symbol id="paper" viewBox="0 0 30 24"><path fill="#eee" d="M5 1h20v17H5z"/><path fill="#fff" d="M9 5v9h9z"/><path stroke-width="3" d="M3 23h24"/></symbol>
		<symbol id="qview" viewBox="0 0 30 24"><path fill="#eee" d="M1 2h13v13H1zM16 2h13v13H16z"/><path stroke-width="3" d="M1 22h28"/></symbol>
		<symbol id="anno" viewBox="0 0 30 24"><path fill="#f4f4f4" d="M15 1l4 11 9 10h-6l-7-5-7 5H2l9-10z"/></symbol>
		<symbol id="annovis" viewBox="0 0 30 24"><use href="#anno"/><circle cx="23" cy="15" r="5" fill="#f8d860" stroke="#c89a20"/></symbol>
		<symbol id="annoauto" viewBox="0 0 30 24"><path stroke="#777" fill="#aaa" d="M13 1l4 10 9 10h-6l-7-5-6 5H1l8-10zM19 3l4 9 6 8"/></symbol>
		<symbol id="gear" viewBox="0 0 30 24"><circle cx="15" cy="13" r="10" stroke-width="5" stroke-dasharray="4 4"/><circle cx="15" cy="13" r="8" fill="#f4f4f4"/><circle cx="15" cy="13" r="4"/></symbol>
		<symbol id="lockui" viewBox="0 0 30 24"><path fill="#f4f4f4" d="M2 12h16v11H2zM14 12V7c0-6 13-6 13 0v5h-4V8"/><path d="M10 15v5"/></symbol>
		<symbol id="hw" viewBox="0 0 30 24"><circle cx="17" cy="12" r="10" fill="#bbb" stroke="#999"/><path stroke="#fff" stroke-width="3" d="M10 6l6 8"/></symbol>
		<symbol id="cleanscr" viewBox="0 0 30 24"><path fill="#f0f0f2" d="M2 3h26v20H2z"/><path stroke-width="4" d="M2 4h26"/></symbol>
		<symbol id="wrench" viewBox="0 0 30 24"><path fill="#fff" stroke="none" d="M2 3l6 3 2-3-4-3c6-1 9 3 8 8l14 12-4 4-13-12C6 14 1 9 2 3z"/></symbol>
	</svg>

	<div class="app">
		<header class="titlebar">
			<button class="app-menu" aria-label="应用程序菜单">
				<svg class="app-logo" viewBox="0 0 42 40" aria-hidden="true">
					<path fill="#e8452c" d="M21 0L0 32l3 7 8-2 4-6h14l3 7 7 1 2-7z"/>
					<path fill="#a81810" d="M21 0l7 24-17 4L0 32z"/>
					<path fill="#5a0a08" d="M14 22l7 4-5 5h15l8 1-11-9-7 3z"/>
					<path fill="#c83020" d="M0 32l11-4 2 4-4 7-6-1zM28 32l13-1-3 8-6-1z"/>
				</svg>
				<span class="caret"></span>
			</button>
			<div class="title-rows">
				<div class="title-row">
					<button class="quick" aria-label="新建"><svg class="icon"><use href="#new"/></svg></button>
					<button class="quick" aria-label="打开"><svg class="icon"><use href="#open"/></svg></button>
					<button class="quick" aria-label="保存"><svg class="icon"><use href="#save"/></svg></button>
					<button class="quick" aria-label="另存为"><svg class="icon"><use href="#saveas"/></svg></button>
					<button class="quick" aria-label="打印"><svg class="icon"><use href="#print"/></svg></button>
					<button class="quick" aria-label="放弃"><svg class="icon"><use href="#undo"/></svg></button>
					<button class="drop" aria-label="放弃列表"><span class="caret small-caret"></span></button>
					<button class="quick dim" aria-label="重做"><svg class="icon"><use href="#redo"/></svg></button>
					<button class="drop" aria-label="重做列表"><span class="caret small-caret"></span></button>
					<button class="quick" aria-label="更多"><svg class="icon"><use href="#more"/></svg></button>
					<h1 class="doc-title">Drawing6.dwg</h1>
					<button class="drop" aria-label="展开搜索"><span class="caret-right"></span></button>
					<input class="search" type="text" placeholder="键入关键字或短语" aria-label="搜索">
					<button class="quick" aria-label="查找"><svg class="icon"><use href="#binoc"/></svg></button>
					<button class="quick" aria-label="用户"><svg class="icon"><use href="#user"/></svg></button>
					<a class="login" href="#">登录</a>
					<button class="drop" aria-label="登录选项"><span class="caret small-caret"></span></button>
					<button class="quick" aria-label="Exchange"><svg class="icon"><use href="#exchange"/></svg></button>
					<button class="quick" aria-label="保持连接"><svg class="icon"><use href="#a360"/></svg></button>
					<button class="drop" aria-label="连接选项"><span class="caret small-caret"></span></button>
					<button class="quick help-btn" aria-label="帮助"><svg class="icon"><use href="#helpball"/></svg></button>
					<button class="drop" aria-label="帮助选项"><span class="caret small-caret"></span></button>
					<div class="window-btns">
						<button aria-label="最小化"><svg class="icon"><use href="#wmin"/></svg></button>
						<button aria-label="最大化"><svg class="icon"><use href="#wmax"/></svg></button>
						<button aria-label="关闭"><svg class="icon"><use href="#wclose"/></svg></button>
					</div>
				</div>
				<nav class="menu-row">
					<a href="#">文件(F)</a>
					<a href="#">编辑(E)</a>
					<a href="#">视图(V)</a>
					<a href="#">插入(I)</a>
					<a href="#">格式(O)</a>
					<a href="#">工具(T)</a>
					<a href="#">绘图(D)</a>
					<a href="#">标注(N)</a>
					<a href="#">修改(M)</a>
					<a href="#">参数(P)</a>
					<a href="#">窗口(W)</a>
					<a href="#">帮助(H)</a>
					<div class="window-btns">
						<button aria-label="最小化图形"><svg class="icon"><use href="#wmin"/></svg></button>
						<button aria-label="还原图形"><svg class="icon"><use href="#wrest"/></svg></button>
						<button aria-label="关闭图形"><svg class="icon"><use href="#wclose"/></svg></button>
					</div>
				</nav>
			</div>
		</header>

		<div class="file-tabs">
			<div class="file-tab">
				<a href="#">Drawing6*</a>
				<button aria-label="关闭 Drawing6"><svg class="tab-x" viewBox="0 0 14 12"><path d="M1 1l12 10M13 1L1 11"/></svg></button>
			</div>
			<button class="add-tab" aria-label="新图形">
				<svg viewBox="0 0 42 24"><path d="M1 1h28c8 0 12 10 12 22H16C6 23 3 15 1 1z"/><path class="plus" d="M21 7v10M15 12h12"/></svg>
			</button>
		</div>

		<div class="toolbars">
			<div class="tool-row">
				<div class="bar">
					<i class="grip"></i>
					<button aria-label="新建"><svg class="icon"><use href="#new"/></svg></button>
					<button aria-label="打开"><svg class="icon"><use href="#open"/></svg></button>
					<button aria-label="保存"><svg class="icon"><use href="#save"/></svg></button>
					<i class="sep"></i>
					<button aria-label="打印"><svg class="icon"><use href="#print"/></svg></button>
					<button aria-label="打印预览"><svg class="icon"><use href="#preview"/></svg></button>
					<button aria-label="发布"><svg class="icon"><use href="#publish"/></svg></button>
					<button aria-label="三维打印"><svg class="icon"><use href="#print3d"/></svg></button>
					<i class="sep"></i>
					<button aria-label="剪切"><svg class="icon"><use href="#cut"/></svg></button>
					<button aria-label="复制"><svg class="icon"><use href="#copy"/></svg></button>
					<button aria-label="粘贴"><svg class="icon"><use href="#paste"/></svg></button>
					<button aria-label="特性匹配"><svg class="icon"><use href="#match"/></svg></button>
					<button aria-label="块编辑器"><svg class="icon"><use href="#bedit"/></svg></button>
					<i class="sep"></i>
					<button aria-label="放弃"><svg class="icon"><use href="#undo"/></svg></button>
					<button class="drop" aria-label="放弃列表"><span class="caret small-caret"></span></button>
					<button class="dim" aria-label="重做"><svg class="icon"><use href="#redo"/></svg></button>
					<button class="drop dim" aria-label="重做列表"><span class="caret small-caret"></span></button>
					<i class="sep"></i>
					<button aria-label="平移"><svg class="icon"><use href="#pan"/></svg></button>
					<button aria-label="实时缩放"><svg class="icon"><use href="#zoomrt"/></svg></button>
					<button aria-label="窗口缩放"><svg class="icon"><use href="#zoomwin"/></svg></button>
					<button aria-label="缩放上一个"><svg class="icon"><use href="#zoomprev"/></svg></button>
					<i class="sep"></i>
					<button aria-label="特性"><svg class="icon"><use href="#props"/></svg></button>
					<button aria-label="设计中心"><svg class="icon"><use href="#dcenter"/></svg></button>
					<button aria-label="工具选项板"><svg class="icon"><use href="#palette"/></svg></button>
					<button aria-label="图纸集"><svg class="icon"><use href="#sheet"/></svg></button>
					<button aria-label="标记集"><svg class="icon"><use href="#markup"/></svg></button>
					<button aria-label="计算器"><svg class="icon"><use href="#calc"/></svg></button>
					<i class="sep"></i>
					<button aria-label="帮助"><svg class="icon"><use href="#help"/></svg></button>
				</div>
				<div class="bar">
					<i class="grip"></i>
					<button aria-label="文字样式"><svg class="icon"><use href="#tstyle"/></svg></button>
					<label class="combo style-combo"><select aria-label="文字样式列表"><option>TH_GBDIM</option></select></label>
					<i class="sep"></i>
					<button aria-label="标注样式"><svg class="icon"><use href="#dstyle"/></svg></button>
					<label class="combo style-combo"><select aria-label="标注样式列表"><option>TH_GBDIM</option></select></label>
					<i class="sep"></i>
					<button aria-label="表格样式"><svg class="icon"><use href="#tabstyle"/></svg></button>
					<label class="combo table-combo"><select aria-label="表格样式列表"><option>Standard</option></select></label>
				</div>
			</div>

			<div class="tool-row">
				<div class="bar">
					<i class="grip"></i>
					<button aria-label="图层特性"><svg class="icon"><use href="#layers"/></svg></button>
					<label class="combo layer-combo">
						<svg class="icon"><use href="#bulb"/></svg>
						<svg class="icon"><use href="#sun"/></svg>
						<svg class="icon"><use href="#vpfreeze"/></svg>
						<svg class="icon"><use href="#unlock"/></svg>
						<span class="swatch"></span>
						<select aria-label="图层"><option>0</option></select>
					</label>
					<button aria-label="置为当前"><svg class="icon"><use href="#laycur"/></svg></button>
					<button aria-label="上一个图层"><svg class="icon"><use href="#layprev"/></svg></button>
					<button aria-label="图层状态"><svg class="icon"><use href="#laystate"/></svg></button>
				</div>
				<div class="bar">
					<i class="grip"></i>
					<label class="combo color-combo mono"><span class="swatch"></span><select aria-label="颜色"><option>ByLayer</option></select></label>
					<i class="sep"></i>
					<label class="combo ltype-combo mono"><span class="rule"></span><select aria-label="线型"><option>ByLayer</option></select></label>
					<i class="sep"></i>
					<label class="combo lweight-combo mono"><span class="rule"></span><select aria-label="线宽"><option>ByLayer</option></select></label>
					<i class="sep"></i>
					<label class="combo plot-combo mono"><select aria-label="打印样式" disabled><option>ByColor</option></select></label>
				</div>
			</div>

			<div class="tool-row">
				<div class="bar">
					<i class="grip"></i>
					<button aria-label="UCS"><svg class="icon"><use href="#ucs"/></svg></button>
					<i class="sep"></i>
					<button aria-label="世界"><svg class="icon"><use href="#ucsworld"/></svg></button>
					<button aria-label="上一个 UCS"><svg class="icon"><use href="#ucsprev"/></svg></button>
					<i class="sep"></i>
					<button aria-label="面 UCS"><svg class="icon"><use href="#ucsface"/></svg></button>
					<button aria-label="对象"><svg class="icon"><use href="#ucsobj"/></svg></button>
					<button aria-label="视图"><svg class="icon"><use href="#ucsview"/></svg></button>
					<i class="sep"></i>
					<button aria-label="原点"><svg class="icon"><use href="#ucsorg"/></svg></button>
					<button aria-label="Z 轴矢量"><svg class="icon"><use href="#ucsz"/></svg></button>
					<button aria-label="三点"><svg class="icon"><use href="#ucs3"/></svg></button>
					<i class="sep"></i>
					<button aria-label="绕 X 轴旋转"><svg class="icon"><use href="#rotx"/></svg></button>
					<button aria-label="绕 Y 轴旋转"><svg class="icon"><use href="#roty"/></svg></button>
					<button aria-label="绕 Z 轴旋转"><svg class="icon"><use href="#rotz"/></svg></button>
					<i class="sep"></i>
					<button aria-label="应用"><svg class="icon"><use href="#ucsapply"/></svg></button>
				</div>
				<div class="bar">
					<i class="grip"></i>
					<button aria-label="受约束的动态观察"><svg class="icon"><use href="#orbit"/></svg></button>
					<button aria-label="自由动态观察"><svg class="icon"><use href="#forbit"/></svg></button>
					<button aria-label="连续动态观察"><svg class="icon"><use href="#corbit"/></svg></button>
				</div>
				<div class="bar">
					<i class="grip"></i>
					<button aria-label="二维线框"><svg class="icon"><use href="#vs2d"/></svg></button>
					<i class="sep"></i>
					<button aria-label="三维线框"><svg class="icon"><use href="#vswire"/></svg></button>
					<button aria-label="三维隐藏"><svg class="icon"><use href="#vshide"/></svg></button>
					<button aria-label="真实"><svg class="icon"><use href="#vsreal"/></svg></button>
					<button aria-label="概念"><svg class="icon"><use href="#vsconc"/></svg></button>
					<i class="sep"></i>
					<button aria-label="管理视觉样式"><svg class="icon"><use href="#vsman"/></svg></button>
				</div>
				<div class="bar">
					<i class="grip"></i>
					<button aria-label="多段体"><svg class="icon"><use href="#polysolid"/></svg></button>
					<button aria-label="长方体"><svg class="icon"><use href="#box"/></svg></button>
					<button aria-label="楔体"><svg class="icon"><use href="#wedge"/></svg></button>
					<button aria-label="圆锥体"><svg class="icon"><use href="#cone"/></svg></button>
					<button aria-label="球体"><svg class="icon"><use href="#sphere"/></svg></button>
					<button aria-label="圆柱体"><svg class="icon"><use href="#cylinder"/></svg></button>
					<button aria-label="圆环体"><svg class="icon"><use href="#torus"/></svg></button>
					<button aria-label="棱锥体"><svg class="icon"><use href="#pyramid"/></svg></button>
					<button aria-label="螺旋"><svg class="icon"><use href="#helix"/></svg></button>
					<button aria-label="平面曲面"><svg class="icon"><use href="#planar"/></svg></button>
					<i class="sep"></i>
					<button aria-label="拉伸"><svg class="icon"><use href="#extrude"/></svg></button>
					<button aria-label="按住并拖动"><svg class="icon"><use href="#presspull"/></svg></button>
					<button aria-label="扫掠"><svg class="icon"><use href="#sweep"/></svg></button>
					<button aria-label="旋转"><svg class="icon"><use href="#revolve"/></svg></button>
					<button aria-label="放样"><svg class="icon"><use href="#loft"/></svg></button>
					<i class="sep"></i>
					<button aria-label="并集"><svg class="icon"><use href="#union"/></svg></button>
					<button aria-label="差集"><svg class="icon"><use href="#subtract"/></svg></button>
					<button aria-label="交集"><svg class="icon"><use href="#intersect"/></svg></button>
					<i class="sep"></i>
				</div>
			</div>
		</div>

		<main class="workspace">
			<div class="side draw-side">
				<div class="vbar">
					<i class="grip"></i>
					<button aria-label="直线"><svg class="icon"><use href="#line"/></svg></button>
					<button aria-label="构造线"><svg class="icon"><use href="#xline"/></svg></button>
					<button aria-label="多段线"><svg class="icon"><use href="#pline"/></svg></button>
					<button aria-label="多边形"><svg class="icon"><use href="#polygon"/></svg></button>
					<button aria-label="矩形"><svg class="icon"><use href="#rect"/></svg></button>
					<button aria-label="圆弧"><svg class="icon"><use href="#arc"/></svg></button>
					<button aria-label="圆"><svg class="icon"><use href="#circle"/></svg></button>
					<button aria-label="修订云线"><svg class="icon"><use href="#cloud"/></svg></button>
					<button aria-label="样条曲线"><svg class="icon"><use href="#spline"/></svg></button>
					<button aria-label="椭圆"><svg class="icon"><use href="#ellipse"/></svg></button>
					<button aria-label="椭圆弧"><svg class="icon"><use href="#earc"/></svg></button>
					<button aria-label="插入块"><svg class="icon"><use href="#insert"/></svg></button>
					<button aria-label="创建块"><svg class="icon"><use href="#block"/></svg></button>
					<button aria-label="点"><svg class="icon"><use href="#point"/></svg></button>
					<button aria-label="图案填充"><svg class="icon"><use href="#hatch"/></svg></button>
					<button aria-label="渐变色"><svg class="icon"><use href="#gradient"/></svg></button>
					<button class="hover" aria-label="面域"><svg class="icon"><use href="#region"/></svg></button>
					<button aria-label="表格"><svg class="icon"><use href="#table"/></svg></button>
					<button aria-label="多行文字"><svg class="icon"><use href="#mtext"/></svg></button>
					<button aria-label="添加选定对象"><svg class="icon"><use href="#addsel"/></svg></button>
				</div>
			</div>
			<div class="side">
				<div class="vbar modify-bar">
					<i class="grip"></i>
					<button aria-label="删除"><svg class="icon"><use href="#erase"/></svg></button>
					<button aria-label="复制对象"><svg class="icon"><use href="#copyobj"/></svg></button>
					<button aria-label="镜像"><svg class="icon"><use href="#mirror"/></svg></button>
					<button aria-label="偏移"><svg class="icon"><use href="#offset"/></svg></button>
					<button aria-label="阵列"><svg class="icon"><use href="#array"/></svg></button>
					<button aria-label="移动"><svg class="icon"><use href="#move"/></svg></button>
					<button aria-label="旋转对象"><svg class="icon"><use href="#rotate"/></svg></button>
					<button aria-label="缩放"><svg class="icon"><use href="#scale"/></svg></button>
					<button aria-label="拉伸对象"><svg class="icon"><use href="#stretch"/></svg></button>
					<button aria-label="修剪"><svg class="icon"><use href="#trim"/></svg></button>
					<button aria-label="延伸"><svg class="icon"><use href="#extend"/></svg></button>
					<button aria-label="打断于点"><svg class="icon"><use href="#breakpt"/></svg></button>
					<button aria-label="打断"><svg class="icon"><use href="#breakobj"/></svg></button>
					<button aria-label="合并"><svg class="icon"><use href="#join"/></svg></button>
					<button aria-label="倒角"><svg class="icon"><use href="#chamfer"/></svg></button>
					<button aria-label="圆角"><svg class="icon"><use href="#fillet"/></svg></button>
					<button aria-label="光顺曲线"><svg class="icon"><use href="#blend"/></svg></button>
					<button aria-label="分解"><svg class="icon"><use href="#explode"/></svg></button>
				</div>
				<div class="vbar text-bar">
					<i class="grip"></i>
					<button aria-label="多行文字"><svg class="icon"><use href="#mtext"/></svg></button>
					<button aria-label="单行文字"><svg class="icon"><use href="#dtext"/></svg></button>
					<button aria-label="编辑文字"><svg class="icon"><use href="#edtext"/></svg></button>
				</div>
			</div>

			<section class="viewport">
				<div class="canvas-row">
					<div class="canvas">
						<svg class="drawing" viewBox="0 0 1650 690" preserveAspectRatio="xMinYMin meet" role="img" aria-label="五角星模型">
							<!-- yellow solid -->
							<path fill="#77760e" d="M36 548L173 426v6L37 555zM258 352l136-119v4L259 358zM173 429l184 63v3l-184-62z"/>
							<path fill="#e6e619" d="M89 128l104 139 201-33-136 118 99 141-184-65L36 549l19-160-55-19V300l69-11z"/>
							<!-- red outline solid -->
							<g stroke="none">
								<path fill="#5e0205" d="M842 14l102 135-1 18-103-140z"/>
								<path fill="#680004" d="M943 150l201-33v17l-200 34z"/>
								<path fill="#680004" d="M618 206l202-32v15l-175 32-27-2z"/>
								<path fill="#380206" d="M618 206l189 66v15L618 223z"/>
								<path fill="#8e0408" d="M1144 120v16l-136 120v-17z"/>
								<path fill="#70040a" d="M1008 240l101 135v16l-101-136z"/>
								<path fill="#380206" d="M922 315l187 62v15l-187-62z"/>
								<path fill="#8e0408" d="M922 315v17L787 450v-15z"/>
							</g>
							<path fill="none" stroke="#b01018" stroke-width="2" d="M842 15l-2 18-20 156-175 32M840 28l103 139 99-17 87-17M618 223l189 64-20 163M922 330l187 62M1008 257l101 135"/>
							<!-- cursor and axis tracking -->
							<path stroke="#c87878" stroke-width="1" d="M0 596l220-36"/>
							<path stroke="#78e890" stroke-width="2" d="M0 597l22 85"/>
							<path fill="none" stroke="#e8e8e8" stroke-width="2" d="M0 583h17v27H0"/>
							<!-- UCS icon -->
							<path stroke="#50a850" stroke-width="9" stroke-linecap="round" d="M76 547l16 60"/>
							<path stroke="#d86068" stroke-width="8" stroke-linecap="round" d="M99 612l81-13"/>
							<path fill="#3a8cd8" d="M89 609l9-6 8 6-4 11h-8z"/>
							<text x="73" y="538" class="axis axis-y">Y</text>
							<text x="177" y="594" class="axis axis-x">X</text>
							<text x="93" y="609" class="axis axis-z">Z</text>
						</svg>
						<p class="view-label">[−][自定义视图][真实]</p>
						<div class="viewcube">
							<svg viewBox="0 0 160 180" aria-label="ViewCube">
								<ellipse cx="77" cy="82" rx="66" ry="51" fill="none" stroke="#434b57" stroke-width="14"/>
								<path fill="#babcc0" d="M41 61l60-9 11 46-58 10z"/>
								<text x="64" y="90" class="cube-face" transform="rotate(-9 76 80)">上</text>
								<text x="53" y="37" class="cube-dir">北</text>
								<text x="133" y="78" class="cube-dir">东</text>
								<text x="82" y="143" class="cube-dir">南</text>
								<text x="0" y="101" class="cube-dir">西</text>
							</svg>
							<button class="wcs">WCS</button>
						</div>
					</div>
					<div class="vscroll">
						<button class="scroll-arrow" aria-label="向上滚动"><svg viewBox="0 0 12 8"><path d="M6 1l6 6H0z"/></svg></button>
						<span class="thumb"></span>
					</div>
				</div>
				<div class="layout-row">
					<div class="tab-nav">
						<button aria-label="第一个布局"><svg viewBox="0 0 16 14"><path d="M0 0h2v14H0zM14 0v14L3 7z"/></svg></button>
						<button aria-label="上一个布局"><svg viewBox="0 0 16 14"><path d="M12 0v14L2 7z"/></svg></button>
						<button aria-label="下一个布局"><svg viewBox="0 0 16 14"><path d="M3 0v14l10-7z"/></svg></button>
						<button aria-label="最后一个布局"><svg viewBox="0 0 16 14"><path d="M14 0h2v14h-2zM2 0v14l11-7z"/></svg></button>
					</div>
					<a class="layout-tab active" href="#">模型</a>
					<a class="layout-tab" href="#">布局1</a>
					<a class="layout-tab" href="#">布局2</a>
					<div class="hscroll">
						<span class="splitter"></span>
						<button class="scroll-arrow" aria-label="向左滚动"><svg viewBox="0 0 8 12"><path d="M1 6l6-6v12z"/></svg></button>
						<span class="thumb"></span>
						<button class="scroll-arrow" aria-label="向右滚动"><svg viewBox="0 0 8 12"><path d="M7 6L1 0v12z"/></svg></button>
					</div>
				</div>
				<aside class="promo">
					<svg class="promo-logo" viewBox="0 0 180 108" aria-label="BLW">
						<path fill="none" stroke="#7cc8f8" stroke-width="5" d="M84 20C112 0 128 14 110 46 94 78 54 96 48 72"/>
						<text x="16 62 108" y="69" class="logo-text">BLW</text>
						<path fill="none" stroke="#a8dcff" stroke-width="5" d="M110 46C100 64 84 76 74 80"/>
						<path fill="#e8701c" d="M76 16l3 8 7 4-7 4-3 8-3-8-7-4 7-4z"/>
					</svg>
					<div class="promo-text">
						<strong>部落窝教育</strong>
						<span>听免费课加QQ群:451192621</span>
					</div>
				</aside>
			</section>

			<div class="side solid-side">
				<div class="vbar">
					<i class="grip"></i>
					<button aria-label="并集"><svg class="icon"><use href="#union"/></svg></button>
					<button aria-label="差集"><svg class="icon"><use href="#subtract"/></svg></button>
					<button aria-label="交集"><svg class="icon"><use href="#intersect"/></svg></button>
					<i class="sep"></i>
					<button aria-label="拉伸面"><svg class="icon"><use href="#exface"/></svg></button>
					<button aria-label="移动面"><svg class="icon"><use href="#moveface"/></svg></button>
					<button aria-label="偏移面"><svg class="icon"><use href="#offface"/></svg></button>
					<button aria-label="删除面"><svg class="icon"><use href="#delface"/></svg></button>
					<button aria-label="旋转面"><svg class="icon"><use href="#rotface"/></svg></button>
					<button aria-label="倾斜面"><svg class="icon"><use href="#taper"/></svg></button>
					<button aria-label="复制面"><svg class="icon"><use href="#copyface"/></svg></button>
					<button aria-label="着色面"><svg class="icon"><use href="#colface"/></svg></button>
					<i class="sep"></i>
					<button aria-label="圆角边"><svg class="icon"><use href="#filedge"/></svg></button>
					<button aria-label="倒角边"><svg class="icon"><use href="#chaedge"/></svg></button>
					<button aria-label="复制边"><svg class="icon"><use href="#copyedge"/></svg></button>
					<button aria-label="着色边"><svg class="icon"><use href="#coledge"/></svg></button>
					<i class="sep"></i>
					<button aria-label="压印"><svg class="icon"><use href="#imprint"/></svg></button>
					<button aria-label="清除"><svg class="icon"><use href="#clean"/></svg></button>
					<button aria-label="分割"><svg class="icon"><use href="#separate"/></svg></button>
					<button aria-label="抽壳"><svg class="icon"><use href="#shell"/></svg></button>
					<button aria-label="检查"><svg class="icon"><use href="#check"/></svg></button>
				</div>
			</div>
			<div class="side">
				<div class="vbar dim-bar">
					<i class="grip"></i>
					<button aria-label="线性"><svg class="icon"><use href="#dimlin"/></svg></button>
					<button aria-label="对齐"><svg class="icon"><use href="#dimali"/></svg></button>
					<button aria-label="弧长"><svg class="icon"><use href="#dimarc"/></svg></button>
					<button aria-label="坐标"><svg class="icon"><use href="#dimord"/></svg></button>
					<i class="sep"></i>
					<button aria-label="半径"><svg class="icon"><use href="#dimrad"/></svg></button>
					<button aria-label="折弯"><svg class="icon"><use href="#dimjog"/></svg></button>
					<button aria-label="直径"><svg class="icon"><use href="#dimdia"/></svg></button>
					<button aria-label="角度"><svg class="icon"><use href="#dimang"/></svg></button>
					<i class="sep"></i>
					<button aria-label="快速标注"><svg class="icon"><use href="#qdim"/></svg></button>
					<button aria-label="基线"><svg class="icon"><use href="#dimbase"/></svg></button>
					<button aria-label="连续"><svg class="icon"><use href="#dimcont"/></svg></button>
					<button aria-label="等距标注"><svg class="icon"><use href="#dimspace"/></svg></button>
					<button aria-label="折断标注"><svg class="icon"><use href="#dimbreak"/></svg></button>
					<i class="sep"></i>
					<button aria-label="公差"><svg class="icon"><use href="#tol"/></svg></button>
					<button aria-label="圆心标记"><svg class="icon"><use href="#cmark"/></svg></button>
					<button aria-label="检验"><svg class="icon"><use href="#inspect"/></svg></button>
					<button aria-label="折弯线性"><svg class="icon"><use href="#jogline"/></svg></button>
					<i class="sep"></i>
					<button aria-label="编辑标注"><svg class="icon"><use href="#dimedit"/></svg></button>
					<button aria-label="编辑标注文字"><svg class="icon"><use href="#dimtedit"/></svg></button>
					<button aria-label="标注更新"><svg class="icon"><use href="#dimupd"/></svg></button>
					<i class="sep"></i>
				</div>
			</div>
		</main>

		<section class="command">
			<div class="command-side">
				<i class="dots"></i>
				<button aria-label="关闭命令行"><svg viewBox="0 0 16 14"><path d="M1 1l14 12M15 1L1 13"/></svg></button>
				<button aria-label="自定义"><svg class="icon"><use href="#wrench"/></svg></button>
			</div>
			<div class="command-main">
				<div class="history">
					<p>命令:</p>
					<p>命令:</p>
				</div>
				<div class="prompt">
					<button class="prompt-icon" aria-label="最近使用的命令"><svg viewBox="0 0 26 20"><path d="M5 4l7 6-7 6M13 16h8"/></svg></button>
					<span class="caret small-caret"></span>
					<input type="text" placeholder="键入命令" aria-label="命令">
				</div>
			</div>
		</section>

		<footer class="status">
			<span class="coords">163.2070, -15.2747 , 0.0000</span>
			<button>INFER</button>
			<button class="cjk">捕捉</button>
			<button class="cjk">栅格</button>
			<button class="cjk">正交</button>
			<button class="cjk">极轴</button>
			<button class="cjk on">对象捕捉</button>
			<button>3DOSNAP</button>
			<button class="cjk on">对象追踪</button>
			<button>DUCS</button>
			<button>DYN</button>
			<button class="cjk">线宽</button>
			<button class="on">TPY</button>
			<button>QP</button>
			<button>SC</button>
			<button>AM</button>
			<span class="space"></span>
			<button class="cjk">模型</button>
			<button aria-label="快速查看布局"><svg class="icon"><use href="#paper"/></svg></button>
			<button aria-label="快速查看图形"><svg class="icon"><use href="#qview"/></svg></button>
			<span class="space wide"></span>
			<button class="scale"><svg class="icon"><use href="#anno"/></svg>1:1<span class="caret"></span></button>
			<button aria-label="注释可见性"><svg class="icon"><use href="#annovis"/></svg></button>
			<button aria-label="自动缩放"><svg class="icon"><use href="#annoauto"/></svg></button>
			<span class="space thin"></span>
			<button aria-label="切换工作空间"><svg class="icon"><use href="#gear"/></svg></button>
			<button aria-label="锁定工具栏"><svg class="icon"><use href="#lockui"/></svg></button>
			<button class="half" aria-label="硬件加速"><svg class="icon"><use href="#hw"/></svg></button>
			<button class="pressed" aria-label="隔离对象"><svg class="icon"><use href="#bulb"/></svg></button>
			<button class="tray" aria-label="状态栏菜单"><span class="caret"></span></button>
			<button aria-label="全屏显示"><svg class="icon"><use href="#cleanscr"/></svg></button>
		</footer>
	</div>

	<div class="watermark" aria-hidden="true"><span>搜狐</span><b>视频</b></div>
</body>
</html>
```
FILE: styles.css
```css
* {
	box-sizing: border-box;
}
body {
	margin: 0;
	height: 100vh;
	padding: 4px 0 0 5px;
	overflow: hidden;
	background: linear-gradient(#0050b8, #0068e8 30%, #00a0f8);
	font-family: "Open Sans", "Noto Sans CJK SC", sans-serif;
	font-size: 22px;
	color: #222;
}
button {
	display: flex;
	align-items: center;
	justify-content: center;
	margin: 0;
	padding: 0;
	border: 0;
	background: none;
	font: inherit;
	color: inherit;
}
a {
	color: inherit;
	text-decoration: none;
}
p, h1 {
	margin: 0;
}
.fills {
	position: absolute;
	width: 0;
	height: 0;
}
.sprite {
	display: none;
}
.icon {
	flex: none;
	display: block;
	width: 30px;
	height: 24px;
	fill: none;
	stroke: #46464a;
	stroke-width: 2;
}
.glyph {
	fill: #333;
	stroke: none;
	font: bold 20px "Open Sans", sans-serif;
}
.glyph.big {
	font-size: 28px;
	font-weight: 600;
}
.glyph.small {
	font-size: 16px;
}
.glyph.tiny {
	font-size: 12px;
}
.glyph.blue {
	fill: #2473aa;
}
.glyph.royal {
	fill: #1d4fb0;
}
.dim {
	opacity: .5;
}
.caret {
	flex: none;
	border: 7px solid transparent;
	border-top: 8px solid #222;
	border-bottom: 0;
}
.small-caret {
	border-width: 5px;
	border-top: 6px solid #444;
	border-bottom: 0;
}
.caret-right {
	border: 7px solid transparent;
	border-left: 8px solid #111;
	border-right: 0;
}
.app {
	display: flex;
	flex-direction: column;
	height: 100%;
	background: #69676b;
}

/* title bar */
.titlebar {
	display: flex;
	padding: 5px 0 0 7px;
	background: linear-gradient(#aaa, #888 45%, #5c5c5c);
	border-bottom: 2px solid #4c4c4c;
	color: #f4f4f4;
}
.app-menu {
	flex: none;
	width: 76px;
	height: 61px;
	margin-bottom: 3px;
	gap: 4px;
	border: 2px solid #222;
	background: linear-gradient(#aaa, #7c7c7c);
}
.app-logo {
	width: 42px;
	height: 40px;
}
.app-menu .caret {
	border-width: 6px;
	border-top: 7px solid #333;
	border-bottom: 0;
}
.title-rows {
	flex: 1;
	min-width: 0;
	padding-left: 9px;
}
.title-row, .menu-row {
	display: flex;
	align-items: center;
}
.title-row {
	height: 31px;
}
.quick {
	flex: none;
	width: 45px;
}
.drop {
	flex: none;
	width: 20px;
}
.doc-title {
	flex: 1;
	padding-right: 8px;
	font-size: 23px;
	font-weight: normal;
	line-height: 28px;
	text-align: center;
}
.search {
	width: 335px;
	height: 31px;
	margin: 0 2px 0 2px;
	padding: 0 4px;
	border: 1px solid #666;
	background: #f6f6f6;
	font: italic 21px "Noto Sans CJK SC", sans-serif;
}
.search::placeholder {
	color: #666;
}
.login {
	width: 159px;
	font-size: 23px;
	line-height: 28px;
}
.help-btn {
	margin-left: 22px;
}
.window-btns {
	display: flex;
	margin-left: 34px;
	margin-right: 3px;
}
.window-btns button {
	width: 31px;
}
.menu-row {
	height: 33px;
	gap: 49px;
	padding: 3px 0 0 17px;
	line-height: 30px;
	white-space: nowrap;
}
.menu-row .window-btns {
	margin-left: auto;
}

/* drawing tabs */
.file-tabs {
	display: flex;
	align-items: flex-end;
	height: 41px;
	margin-left: 7px;
	padding: 0 0 3px 30px;
	background: linear-gradient(#9e9e9e, #8e8e8e);
	border-bottom: 2px solid #777;
}
.file-tab {
	display: flex;
	align-items: center;
	justify-content: space-between;
	width: 254px;
	height: 31px;
	padding: 0 38px 0 29px;
	background: linear-gradient(#dcdcdc, #b4b4b4);
	clip-path: polygon(0 100%, 4% 80%, 8% 12%, 11% 0, 89% 0, 92% 12%, 96% 80%, 100% 100%);
}
.tab-x {
	width: 14px;
	height: 12px;
	fill: none;
	stroke: #777;
	stroke-width: 3;
}
.add-tab svg {
	width: 42px;
	height: 24px;
	fill: #7c7c7c;
	stroke: #555;
	stroke-width: 2;
}
.add-tab .plus {
	stroke: #aaa;
	stroke-width: 4;
}

/* horizontal toolbars */
.toolbars {
	display: flex;
	flex-direction: column;
	gap: 7px;
	padding: 7px 0 7px 7px;
	overflow: hidden;
}
.tool-row {
	display: flex;
	gap: 4px;
}
.bar {
	flex: none;
	display: flex;
	height: 33px;
	background: #efedf0;
	box-shadow: 0 0 0 1px #4a4a4c;
}
.bar button {
	width: 43px;
}
.bar .drop {
	width: 24px;
}
.bar .grip {
	width: 15px;
	background: #505052;
	border: 4px solid #505052;
	background-image: repeating-linear-gradient(#505052 0 2px, transparent 2px 4px), repeating-linear-gradient(90deg, #222 0 2px, #707072 2px 3px);
}
.bar .sep {
	width: 2px;
	margin: 3px 5px 3px 4px;
	background: #99979b;
}
.combo {
	display: flex;
	align-items: center;
	margin: 0 2px;
	border: 2px solid #858387;
	border-radius: 4px;
	background: linear-gradient(#f2f2f4, #d4d2d6);
}
.combo::after {
	content: "";
	margin: 0 8px;
	border: 7px solid transparent;
	border-top: 8px solid #111;
	border-bottom: 0;
}
.combo select {
	flex: 1;
	min-width: 0;
	height: 28px;
	padding: 0 0 2px;
	border: 0;
	background: none;
	appearance: none;
	font: inherit;
	line-height: 26px;
	color: #222;
}
.mono, .mono select {
	font-family: "Liberation Mono", monospace;
	font-size: 18px;
	font-weight: bold;
}
.swatch {
	width: 19px;
	height: 17px;
	margin: 0 6px 0 7px;
	border: 2px solid #222;
	background: #fff;
}
.rule {
	height: 2px;
	margin: 0 6px;
	background: #222;
}
.style-combo {
	width: 222px;
	padding-left: 32px;
}
.table-combo {
	width: 222px;
	padding-left: 6px;
}
.layer-combo {
	width: 559px;
	padding-left: 3px;
}
.color-combo {
	width: 279px;
}
.ltype-combo {
	width: 298px;
}
.ltype-combo .rule {
	width: 113px;
}
.lweight-combo {
	width: 232px;
}
.lweight-combo .rule {
	width: 66px;
}
.plot-combo {
	width: 222px;
	padding-left: 14px;
	background: #f4f4f6;
}
.plot-combo select {
	font-weight: normal;
	color: #777;
	opacity: 1;
}
.plot-combo::after {
	border-top-color: #aaa;
}

/* workspace */
.workspace {
	flex: 1;
	display: flex;
	min-height: 0;
	padding: 0 7px 5px 6px;
}
.side {
	flex: none;
	display: flex;
	flex-direction: column;
	gap: 3px;
	width: 45px;
	margin-right: 8px;
}
.side:last-child {
	margin-right: 0;
}
.draw-side {
	padding-bottom: 54px;
}
.solid-side {
	padding-bottom: 27px;
}
.vbar {
	flex: 1;
	display: flex;
	flex-direction: column;
	min-height: 0;
	border: 1px solid #444;
	background: #efedf0;
}
.modify-bar {
	flex: 600;
}
.text-bar {
	flex: 117;
}
.vbar button {
	flex: 1;
	min-height: 0;
}
.vbar .hover {
	border: 2px solid #b4b2b6;
	border-radius: 4px;
	background: #fafafa;
}
.vbar .grip {
	height: 13px;
	background: #505052;
	border: solid #505052;
	border-width: 4px 8px;
	background-image: repeating-linear-gradient(90deg, #505052 0 2px, transparent 2px 4px), repeating-linear-gradient(#222 0 2px, #707072 2px 3px);
}
.vbar .sep {
	height: 2px;
	margin: 3px 3px 4px;
	background: #a9a7ab;
}
.dim-bar {
	padding-bottom: 10px;
}
.viewport {
	position: relative;
	flex: 1;
	display: flex;
	flex-direction: column;
	min-width: 0;
	margin-right: 10px;
	border: 3px solid #929094;
	border-width: 3px 1px 2px 3px;
}
.canvas-row {
	flex: 1;
	display: flex;
	min-height: 0;
}
.canvas {
	position: relative;
	flex: 1;
	overflow: hidden;
	background: #1f262f;
}
.drawing {
	display: block;
	width: 100%;
	height: 100%;
}
.view-label {
	position: absolute;
	top: 5px;
	left: 6px;
	font: 22px/30px "Noto Sans CJK SC", sans-serif;
	color: #d8dce0;
}
.axis {
	font: 26px "Lato", sans-serif;
}
.axis-x {
	fill: #b03040;
}
.axis-y {
	fill: #288838;
}
.axis-z {
	fill: #2050b0;
}
.viewcube {
	position: absolute;
	top: 0;
	right: 19px;
	width: 160px;
}
.viewcube svg {
	display: block;
	width: 160px;
	height: 180px;
}
.cube-dir {
	font: 22px "Noto Sans CJK SC", sans-serif;
	fill: #a4a8ae;
}
.cube-face {
	font: 26px "Noto Sans CJK SC", sans-serif;
	fill: #4a4c50;
}
.wcs {
	width: 89px;
	height: 25px;
	margin: -14px 0 0 32px;
	padding-left: 9px;
	justify-content: flex-start;
	border-radius: 6px;
	background: #9b9da7;
	font-size: 18px;
	color: #5c606a;
}
.vscroll {
	display: flex;
	flex-direction: column;
	align-items: center;
	width: 33px;
	background: #f0eef1;
	border-bottom: 2px solid #aaa;
}
.scroll-arrow svg {
	width: 12px;
	height: 12px;
	fill: #333;
}
.vscroll .scroll-arrow {
	height: 28px;
}
.thumb {
	border: 2px solid #9a989c;
	border-radius: 3px;
	background: linear-gradient(135deg, #fafafa, #ccc);
}
.vscroll .thumb {
	width: 27px;
	height: 22px;
	margin-top: calc(18vh - 7px);
}
.layout-row {
	display: flex;
	height: 24px;
	background: #f4f2f5;
	font: 22px/24px "Liberation Mono", "Noto Sans CJK SC", monospace;
}
.tab-nav {
	display: flex;
}
.tab-nav button {
	width: 27px;
	border-right: 1px solid #aaa;
	border-bottom: 2px solid #aaa;
}
.tab-nav svg {
	width: 16px;
	height: 14px;
	fill: #666;
}
.layout-tab {
	display: block;
	padding: 0 18px 0 12px;
	border-bottom: 2px solid #aaa;
	background: linear-gradient(to top left, transparent 46%, #777 46% 54%, transparent 54%) right / 12px 100% no-repeat;
}
.layout-tab.active {
	padding: 0 18px;
	border: 0;
	background: #1f262f;
	color: #fff;
	clip-path: polygon(0 0, 100% 0, 86% 92%, 14% 92%);
}
.hscroll {
	flex: none;
	display: flex;
	align-items: center;
	width: 35%;
	margin-left: auto;
	padding-right: 42px;
	background: #ededef;
}
.splitter {
	width: 8px;
	height: 19px;
	margin: 0 14px 0 0;
	border: 2px solid #aaa;
	border-right: 0;
}
.hscroll .thumb {
	width: 28px;
	height: 20px;
	margin: 0 32% 0 auto;
}
.promo {
	position: absolute;
	right: -8px;
	bottom: 33px;
	display: flex;
	height: 108px;
	width: 435px;
	background: #068fd0;
	color: #f0faff;
}
.promo-logo {
	width: 180px;
	height: 108px;
}
.logo-text {
	font: bold 48px "DejaVu Sans", sans-serif;
	fill: #f4fbff;
}
.promo-text {
	position: absolute;
	right: 13px;
	top: 10px;
	display: flex;
	flex-direction: column;
	align-items: flex-end;
	font-family: "Noto Sans CJK SC", sans-serif;
	white-space: nowrap;
}
.promo-text strong {
	font-size: 46px;
	font-weight: normal;
	line-height: 58px;
}
.promo-text span {
	font-size: 23px;
	line-height: 34px;
}

/* command line */
.command {
	display: flex;
	margin: 0 2px 1px 7px;
}
.command-side {
	display: flex;
	flex-direction: column;
	align-items: center;
	justify-content: space-between;
	width: 42px;
	padding: 6px 0 5px;
	background: linear-gradient(#7c7c7e, #3c3c3e);
}
.command-side .dots {
	width: 32px;
	height: 8px;
	background: repeating-linear-gradient(#747476 0 2px, transparent 2px 4px), repeating-linear-gradient(90deg, #aaa 0 2px, transparent 2px 4px);
}
.command-side button svg:not(.icon) {
	width: 16px;
	height: 14px;
	fill: none;
	stroke: #fff;
	stroke-width: 3;
}
.command-main {
	flex: 1;
}
.history {
	padding: 3px 4px 2px;
	border-bottom: 2px solid #99979b;
	background: #cbc9cc;
	font: 24px/23px "Liberation Mono", "Noto Sans CJK SC", monospace;
	color: #333;
}
.prompt {
	display: flex;
	align-items: center;
	height: 32px;
	padding-left: 10px;
	gap: 7px;
	background: #fff;
}
.prompt-icon {
	width: 28px;
	height: 22px;
	border: 2px solid #a8acbc;
	border-radius: 3px;
	background: #e0e4ee;
}
.prompt-icon svg {
	width: 24px;
	height: 18px;
	fill: none;
	stroke: #445;
	stroke-width: 2;
}
.prompt .small-caret {
	border-top-color: #999;
}
.prompt input {
	flex: 1;
	height: 32px;
	padding: 0 10px 3px 9px;
	border: 0;
	font: 24px/28px "Noto Sans CJK SC", sans-serif;
}
.prompt input::placeholder {
	color: #aaa;
}

/* status bar */
.status {
	flex: none;
	display: flex;
	height: 27px;
	margin-left: 7px;
	overflow: hidden;
	background: linear-gradient(#8e8e8e, #7a7a7a);
	border-top: 2px solid #333;
	font: 18px/34px "Liberation Mono", monospace;
	color: #111;
}
.status button {
	flex: none;
	height: 34px;
	min-width: 33px;
	padding: 0 5px;
	border-right: 2px solid #666;
	background: linear-gradient(#b4b4b4, #969696);
	white-space: pre;
}
.status .cjk {
	padding: 0 4px 0 5px;
	font-family: "Noto Sans CJK SC", sans-serif;
	font-size: 23px;
}
.status .on {
	background: linear-gradient(#d8f0f4, #84c4d4);
}
.coords {
	width: 374px;
	padding-left: 20px;
	font-size: 19px;
	white-space: pre;
}
.space {
	width: 21px;
}
.space.wide {
	flex: 1;
}
.space.thin {
	width: 9px;
}
.status .scale {
	gap: 5px;
}
.status .half {
	width: 24px;
	min-width: 0;
	padding: 0;
	overflow: hidden;
	border: 0;
}
.status .pressed {
	width: 45px;
	border: 2px solid #555;
	background: #aaa;
}
.status .tray {
	margin-left: 8px;
	width: 27px;
	min-width: 0;
}
.status button:last-child {
	margin-right: 31px;
}

/* broadcaster mark over the top right corner */
.watermark {
	position: absolute;
	top: 45px;
	right: 80px;
	display: flex;
	align-items: center;
	height: 60px;
	gap: 6px;
	font: bold 54px/58px "Noto Sans CJK SC", sans-serif;
	color: #fff;
	opacity: .5;
	pointer-events: none;
}
.watermark span {
	font-size: 60px;
	font-weight: 500;
}
.watermark b {
	padding: 0 6px;
	border-radius: 8px;
	background: #fff;
	color: #555;
}
```
